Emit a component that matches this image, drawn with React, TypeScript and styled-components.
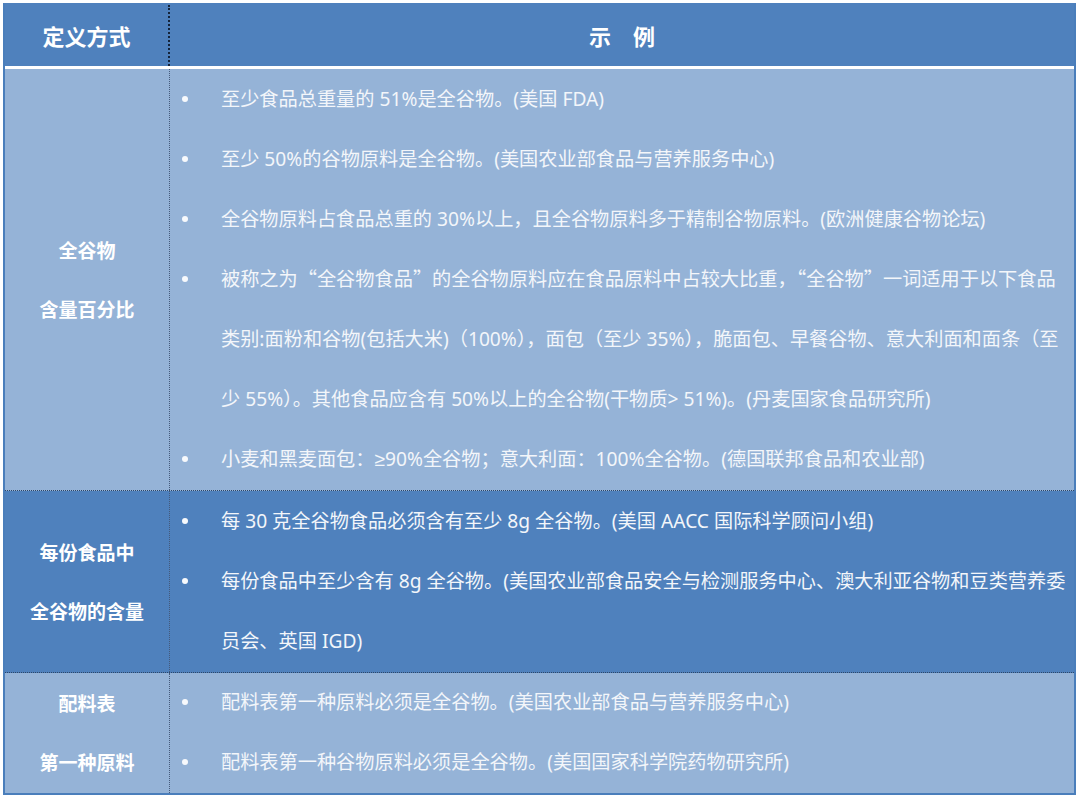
import React from "react";
import styled, { createGlobalStyle } from "styled-components";

const Global = createGlobalStyle`
  html, body { margin: 0; padding: 0; background: #ffffff; }
  body { font-family: "Noto Sans", "Noto Sans CJK SC", sans-serif; }
`;

const Frame = styled.div`
  margin: 3px 0 0 3px;
  width: 1073px;
  box-sizing: border-box;
  border: 2px solid #4a7ebb;
  border-top-color: #4f81bd;
  background: #95b3d7;
`;

const HeaderRow = styled.div`
  display: grid;
  grid-template-columns: 165px 1fr;
  height: 61px;
  background: #4f81bd;
  border-bottom: 3px solid #ffffff;
`;

const HeaderCell = styled.div<{ $divider?: boolean }>`
  display: flex;
  align-items: center;
  justify-content: center;
  color: #ffffff;
  font-weight: 700;
  font-size: 22px;
  font-family: "Noto Sans CJK SC", sans-serif;
  box-sizing: border-box;
  border-right: ${(p) => (p.$divider ? "2px dotted #15243a" : "none")};
  padding-bottom: 2px;
`;

const Row = styled.div<{ $dark?: boolean; $last?: boolean; $height: number }>`
  display: grid;
  grid-template-columns: 165px 1fr;
  height: ${(p) => p.$height}px;
  background: ${(p) => (p.$dark ? "#4f81bd" : "#95b3d7")};
  border-bottom: ${(p) => (p.$last ? "none" : "1px dotted #2c4668")};
`;

const LabelCell = styled.div`
  display: flex;
  flex-direction: column;
  align-items: center;
  justify-content: center;
  box-sizing: border-box;
  border-right: 1px dotted #44597a;
  color: #ffffff;
  font-weight: 700;
  font-size: 19px;
  font-family: "Noto Sans CJK SC", sans-serif;
  padding-bottom: 2px;
`;

const LabelLine = styled.div`
  white-space: nowrap;
  line-height: 59px;
`;

const ItemsCell = styled.div<{ $padTop?: number }>`
  padding-top: ${(p) => p.$padTop ?? 1}px;
  padding-left: 11px;
  min-width: 0;
  overflow: hidden;
`;

const Item = styled.div`
  display: grid;
  grid-template-columns: 40px 1fr;
  color: #f3f6fa;
  font-size: 19.2px;
`;

const BulletBox = styled.div`
  height: 58px;
  padding-bottom: 2px;
  display: flex;
  align-items: center;
`;

const Dot = styled.span`
  display: block;
  width: 6px;
  height: 6px;
  border-radius: 50%;
  background: #f7f9fc;
  margin-left: 1px;
`;

const TextLine = styled.div`
  white-space: nowrap;
  line-height: 57px;
  padding-bottom: 3px;
`;

const Q = styled.span`
  font-family: "Noto Sans CJK SC", sans-serif;
`;

const Sym = styled.span`
  font-family: "Liberation Sans", sans-serif;
`;

type Entry = React.ReactNode[];

const Bullet = ({ lines }: { lines: Entry }) => (
  <Item>
    <BulletBox>
      <Dot />
    </BulletBox>
    <div>
      {lines.map((l, i) => (
        <TextLine key={i}>{l}</TextLine>
      ))}
    </div>
  </Item>
);

export default function App() {
  return (
    <>
      <Global />
      <Frame>
        <HeaderRow>
          <HeaderCell $divider>定义方式</HeaderCell>
          <HeaderCell>示　例</HeaderCell>
        </HeaderRow>

        <Row $height={421}>
          <LabelCell>
            <LabelLine>全谷物</LabelLine>
            <LabelLine>含量百分比</LabelLine>
          </LabelCell>
          <ItemsCell>
            <Bullet lines={["至少食品总重量的 51%是全谷物。(美国 FDA)"]} />
            <Bullet lines={["至少 50%的谷物原料是全谷物。(美国农业部食品与营养服务中心)"]} />
            <Bullet
              lines={["全谷物原料占食品总重的 30%以上，且全谷物原料多于精制谷物原料。(欧洲健康谷物论坛)"]}
            />
            <Bullet
              lines={[
                <>
                  被称之为<Q>“</Q>全谷物食品<Q>”</Q>的全谷物原料应在食品原料中占较大比重，<Q>“</Q>全谷物
                  <Q>”</Q>一词适用于以下食品
                </>,
                "类别:面粉和谷物(包括大米)（100%），面包（至少 35%），脆面包、早餐谷物、意大利面和面条（至",
                "少 55%）。其他食品应含有 50%以上的全谷物(干物质> 51%)。(丹麦国家食品研究所)",
              ]}
            />
            <Bullet
              lines={[
                <>
                  小麦和黑麦面包：<Sym>≥</Sym>90%全谷物；意大利面：100%全谷物。(德国联邦食品和农业部)
                </>,
              ]}
            />
          </ItemsCell>
        </Row>

        <Row $dark $height={181}>
          <LabelCell>
            <LabelLine>每份食品中</LabelLine>
            <LabelLine>全谷物的含量</LabelLine>
          </LabelCell>
          <ItemsCell>
            <Bullet lines={["每 30 克全谷物食品必须含有至少 8g 全谷物。(美国 AACC 国际科学顾问小组)"]} />
            <Bullet
              lines={[
                "每份食品中至少含有 8g 全谷物。(美国农业部食品安全与检测服务中心、澳大利亚谷物和豆类营养委",
                "员会、英国 IGD)",
              ]}
            />
          </ItemsCell>
        </Row>

        <Row $last $height={120}>
          <LabelCell>
            <LabelLine>配料表</LabelLine>
            <LabelLine>第一种原料</LabelLine>
          </LabelCell>
          <ItemsCell $padTop={0}>
            <Bullet lines={["配料表第一种原料必须是全谷物。(美国农业部食品与营养服务中心)"]} />
            <Bullet lines={["配料表第一种谷物原料必须是全谷物。(美国国家科学院药物研究所)"]} />
          </ItemsCell>
        </Row>
      </Frame>
    </>
  );
}
